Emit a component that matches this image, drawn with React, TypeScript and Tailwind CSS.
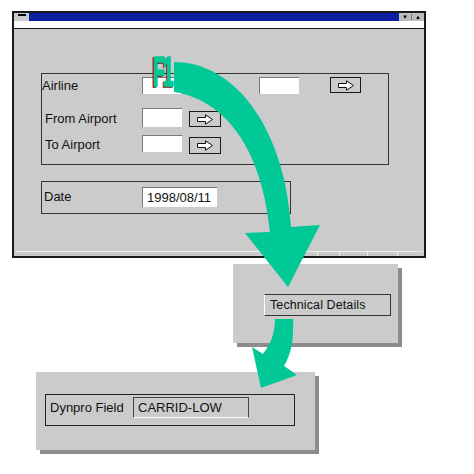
const font = { fontFamily: '"Liberation Sans", Arial, sans-serif' };

const ArrowButton = ({ className }: { className: string }) => (
  <div className={`flex items-center justify-center border border-[#1a1a1a] bg-[#cbcbcb] ${className}`}>
    <svg width="18" height="11" viewBox="0 0 18 11">
      <path d="M1.5 3.5H9.5V0.8L16.5 5.5L9.5 10.2V7.5H1.5Z" fill="white" stroke="#111" strokeWidth="1" />
    </svg>
  </div>
);

const Field = ({ className, value }: { className: string; value?: string }) => (
  <div className={`bg-white border-t border-l border-[#7a7a7a] text-[13px] text-[#111] pl-[4px] ${className}`}>
    {value}
  </div>
);

const MainWindow = () => (
  <div className="absolute left-[12px] top-[11px] w-[414px] h-[247px] border-2 border-[#1a1a1a] bg-[#cbcbcb] flex flex-col">
    {/* title bar */}
    <div className="h-[8px] flex">
      <div className="w-[15px] bg-[#cbcbcb] flex items-start justify-center pt-[1px]">
        <div className="w-[8px] h-[2px] bg-black" />
      </div>
      <div className="flex-1 bg-[#0b1f9e]" />
      <div className="w-[25px] bg-[#bdbdbd] flex items-center justify-end gap-[3px] pr-[3px] text-[6px] leading-none text-black">
        <span>▼</span>
        <span className="w-px h-[6px] bg-[#777]" />
        <span>▲</span>
      </div>
    </div>
    {/* menu strip */}
    <div className="h-[8px] bg-white border-b border-[#1a1a1a]" />

    <div className="flex-1 flex flex-col pl-[27px] pt-[44px]">
      {/* Airline group */}
      <div className="w-[348px] h-[92px] border border-[#333]">
        <div className="mt-[3px] flex items-start">
          <div className="w-[100px] leading-[17px] text-[13px] text-[#111]">Airline</div>
          <Field className="w-[40px] h-[17px]" />
          <ArrowButton className="ml-[1px] w-[32px] h-[17px]" />
          <Field className="ml-[44px] w-[40px] h-[17px]" />
          <ArrowButton className="ml-[31px] w-[31px] h-[16px]" />
        </div>
        <div className="mt-[14px] flex items-start">
          <div className="w-[100px] pl-[3px] leading-[21px] text-[13px] text-[#111]">From Airport</div>
          <Field className="w-[40px] h-[19px]" />
          <ArrowButton className="ml-[7px] mt-[3px] w-[32px] h-[16px]" />
        </div>
        <div className="mt-[6px] flex items-start">
          <div className="w-[100px] pl-[3px] leading-[19px] text-[13px] text-[#111]">To Airport</div>
          <Field className="w-[40px] h-[17px]" />
          <ArrowButton className="ml-[7px] mt-[2px] w-[32px] h-[17px]" />
        </div>
      </div>

      {/* Date group */}
      <div className="mt-[16px] w-[250px] h-[33px] border border-[#333]">
        <div className="mt-[5px] flex items-start">
          <div className="w-[100px] pl-[2px] leading-[20px] text-[13px] text-[#111]">Date</div>
          <Field className="w-[75px] h-[20px] leading-[20px]" value="1998/08/11" />
        </div>
      </div>

      {/* status bar */}
      <div className="mt-auto -ml-[25px] mr-[1px] h-[5px] flex border-t border-[#eeeeee]">
        <div className="flex-1" />
        <div className="w-[22px] border-l border-[#eeeeee]" />
        <div className="w-[28px] border-l border-[#eeeeee]" />
        <div className="w-[30px] border-l border-[#eeeeee]" />
        <div className="w-[26px] border-l border-[#eeeeee]" />
      </div>
    </div>
  </div>
);

const TechWindow = () => (
  <div className="absolute left-[233px] top-[264px] w-[165px] h-[79px] bg-[#cbcbcb] shadow-[4px_4px_0_#8c8c8c] pt-[30px] pl-[31px]">
    <div className="w-[127px] h-[22px] border-t border-r border-b border-[#333] border-l border-l-white pl-[5px] leading-[20px] text-[12.5px] text-[#111] tracking-[0.1px]">
      Technical Details
    </div>
  </div>
);

const DynproWindow = () => (
  <div className="absolute left-[36px] top-[372px] w-[279px] h-[78px] bg-[#cbcbcb] shadow-[4px_4px_0_#8c8c8c] pt-[22px] pl-[9px]">
    <div className="w-[250px] h-[32px] border border-[#222] flex items-start">
      <div className="ml-[4px] w-[83px] mt-[2px] leading-[21px] text-[13px] text-[#111]">Dynpro Field</div>
      <div className="mt-[2px] w-[116px] h-[21px] border-t border-l border-r border-[#444] border-b border-b-white pl-[4px] leading-[20px] text-[13px] text-[#111]">
        CARRID-LOW
      </div>
    </div>
  </div>
);

const Arrows = () => (
  <svg className="absolute left-0 top-0 pointer-events-none" width="474" height="474" viewBox="0 0 474 474">
    <path
      d="M174 62 C236 62 285 130 291 227 L320 225 L288 287 L245 233 L270 232 C262 150 226 100 174 92 Z"
      fill="#00c896"
    />
    <path
      d="M275 319 L293 319 C294 340 291 354 284 366 L297 375 L261 388 L252 347 L263 354 C271 343 275 333 275 319 Z"
      fill="#00c896"
    />
    <g transform="translate(153 86) scale(0.8 1.75)" fontFamily='"Liberation Sans", Arial, sans-serif' fontWeight="bold" fontSize="24" letterSpacing="-2">
      <text x="-1.5" y="0.5" fill="#7a1414" stroke="#7a1414" strokeWidth="1">F1</text>
      <text x="0" y="0" fill="#00c896" stroke="#00c896" strokeWidth="1">F1</text>
    </g>
  </svg>
);

export default function App() {
  return (
    <div className="relative w-[474px] h-[474px] bg-white overflow-hidden" style={font}>
      <MainWindow />
      <TechWindow />
      <DynproWindow />
      <Arrows />
    </div>
  );
}
